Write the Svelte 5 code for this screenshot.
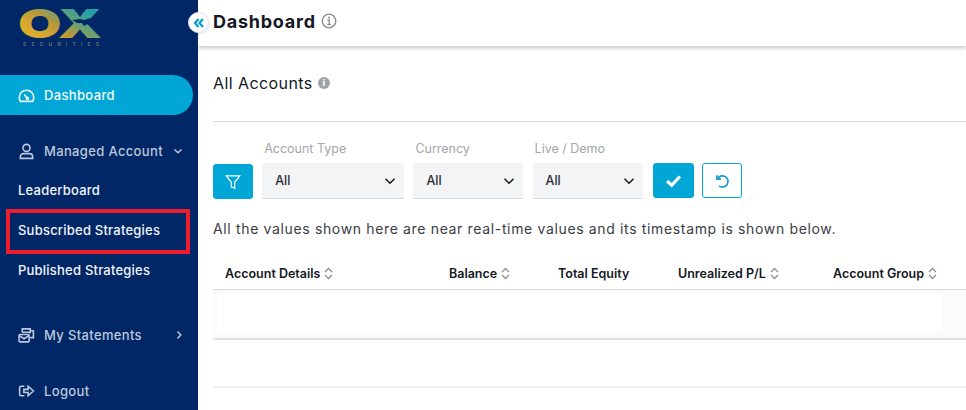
<script lang="ts">
  type Col = { label: string; sortable: boolean }

  const filters = [
    { label: "Account Type", width: 142 },
    { label: "Currency", width: 110 },
    { label: "Live / Demo", width: 110 },
  ]

  const columns: Col[] = [
    { label: "Account Details", sortable: true },
    { label: "Balance", sortable: true },
    { label: "Total Equity", sortable: false },
    { label: "Unrealized P/L", sortable: true },
    { label: "Account Group", sortable: true },
  ]
</script>

<div class="app">
  <aside class="sidebar">
    <div class="logo">
      <svg width="90" height="50" viewBox="0 0 90 50" aria-label="OX Securities">
        <defs>
          <linearGradient id="oxfill" x1="0" y1="1" x2="1" y2="0.1">
            <stop offset="0" stop-color="#e3b32c" />
            <stop offset="0.3" stop-color="#d9a92e" />
            <stop offset="0.48" stop-color="#b8983a" />
            <stop offset="0.62" stop-color="#6fa070" />
            <stop offset="0.8" stop-color="#2a9fa0" />
            <stop offset="1" stop-color="#1c9fc4" />
          </linearGradient>
        </defs>
        <text class="ox" x="0" y="38" textLength="84" lengthAdjust="spacingAndGlyphs" fill="url(#oxfill)">OX</text>
        <path d="M54 20l8-1 4 1 6-2-1 5-5 3-2-3-5 0z" fill="#012766" />
        <text class="sec" x="5" y="46" textLength="76">SECURITIES</text>
      </svg>
    </div>

    <a class="item active" href="#dashboard">
      <svg class="ico" viewBox="0 0 16 16"><path d="M2.200 13.500A6.600 6.600 0 0 1 1.200 9.800a6.800 6.800 0 0 1 13.600 0c0 1.400-.4 2.700-1 3.700z M6 7l2.600 3.500" /><circle cx="8.800" cy="10.700" r="1" /></svg>
      <span>Dashboard</span>
    </a>

    <div class="group">
      <a class="item muted" href="#managed">
        <svg class="ico" viewBox="0 0 16 16"><circle cx="8" cy="4.600" r="3.300" /><path d="M2.200 14.500v-1.500a3 3 0 0 1 3-3h5.600a3 3 0 0 1 3 3v1.500z" /></svg>
        <span>Managed Account</span>
        <svg class="caret down" viewBox="0 0 10 10"><path d="M1.500 3.500 5 6.800l3.500-3.300" /></svg>
      </a>
      <ul class="sub">
        <li><a href="#leaderboard">Leaderboard</a></li>
        <li class="marked"><a href="#subscribed">Subscribed Strategies</a></li>
        <li><a href="#published">Published Strategies</a></li>
      </ul>
    </div>

    <a class="item muted statements" href="#statements">
      <svg class="ico" viewBox="0 0 16 16"><path d="M4 5V1.800h7.500V5 M11.500 3.500h3v6.500h-3 M4 5h7.500v1" /><rect x="1" y="7" width="9.500" height="7" rx="1" /><path d="M1 8l4.700 3 4.800-3" /></svg>
      <span>My Statements</span>
      <svg class="caret" viewBox="0 0 10 10"><path d="M3.500 1.500 6.800 5 3.500 8.500" /></svg>
    </a>

    <a class="item muted logout" href="#logout">
      <svg class="ico" viewBox="0 0 16 16"><path d="M6 3H3a1.500 1.500 0 0 0-1.500 1.500v6A1.500 1.500 0 0 0 3 12h3 M5.500 6h4V3l5 4.500-5 4.500V9h-4z" /></svg>
      <span>Logout</span>
    </a>
  </aside>

  <button class="collapse" aria-label="Collapse sidebar">
    <svg viewBox="0 0 12 12" width="12" height="12"><path d="M5.500 2 2 6l3.500 4 M10 2 6.500 6l3.500 4" /></svg>
  </button>

  <main class="main">
    <header class="topbar">
      <h1>Dashboard</h1>
      <svg class="info" viewBox="0 0 16 16" width="16" height="16"><circle cx="8" cy="8" r="6.800" /><path d="M6.500 7h1.700v4.500 M6.300 11.700h3.500" /><circle class="dot" cx="8" cy="4.500" r="1" /></svg>
    </header>

    <section class="content">
      <div class="title">
        <h2>All Accounts</h2>
        <span class="badge">i</span>
      </div>

      <div class="filters">
        <button class="btn solid filter" aria-label="Filter">
          <svg viewBox="0 0 16 16" width="16" height="16"><path d="M1.200 1.800h13.600L9.700 8.300v6l-3.400-1.500V8.300z" /></svg>
        </button>
        {#each filters as f}
          <div class="field" style="width: {f.width}px">
            <span class="field-label">{f.label}</span>
            <div class="select">
              <span>All</span>
              <svg viewBox="0 0 12 12" width="12" height="12"><path d="M1.500 3.800 6 8.200l4.500-4.400" /></svg>
            </div>
          </div>
        {/each}
        <button class="btn solid apply" aria-label="Apply">
          <svg viewBox="0 0 16 16" width="17" height="17"><path d="M2 8.500 6.300 12.500 14 4.200" /></svg>
        </button>
        <button class="btn outline" aria-label="Reset">
          <svg viewBox="0 0 16 16" width="16" height="16"><path d="M3 2.200v4h4 M3.300 6.200A5.600 5.600 0 1 1 5 12.900" /></svg>
        </button>
      </div>

      <p class="note">All the values shown here are near real-time values and its timestamp is shown below.</p>

      <div class="table">
        <div class="thead">
          {#each columns as c}
            <div class="th">
              <span>{c.label}</span>
              {#if c.sortable}
                <svg viewBox="0 0 9 13" width="9" height="13"><path d="M1 5 4.500 1.500 8 5 M1 8l3.500 3.500L8 8" /></svg>
              {/if}
            </div>
          {/each}
        </div>
        <div class="row"><div class="row-inner"></div></div>
        <div class="spacer"></div>
      </div>
    </section>
  </main>
</div>

<style>
  :global(body) {
    margin: 0;
    font-family: "Inter", "Open Sans", sans-serif;
    background: #fff;
    color: #14181f;
    overflow: hidden;
  }

  .app {
    position: relative;
    display: flex;
    height: 410px;
    overflow: hidden;
  }

  .sidebar {
    flex: 0 0 198px;
    display: flex;
    flex-direction: column;
    background: #012766;
    color: #fff;
  }

  .sidebar > * {
    flex: none;
  }

  .logo {
    height: 75px;
    padding-left: 18px;
  }

  .logo svg {
    display: block;
  }

  .ox {
    font-family: "Inter", sans-serif;
    font-size: 40px;
    font-weight: 900;
  }

  .sec {
    font-family: "Inter", sans-serif;
    font-size: 5px;
    fill: #6e7a66;
    font-weight: 600;
  }

  a {
    text-decoration: none;
    color: inherit;
  }

  .item {
    display: flex;
    align-items: center;
    gap: 9px;
    height: 40px;
    padding-left: 18px;
    font-size: 13px;
    font-weight: 500;
    letter-spacing: 0.35px;
  }

  .ico {
    flex: none;
    width: 17px;
    height: 17px;
    fill: none;
    stroke: currentColor;
    stroke-width: 1.500;
  }

  .active {
    width: 175px;
    border-radius: 0 20px 20px 0;
    background: #00a6d6;
    color: #f2fbff;
  }

  .group {
    margin-top: 16px;
  }

  .muted {
    color: #bcc8dc;
  }

  .caret {
    width: 10px;
    height: 10px;
    fill: none;
    stroke: currentColor;
    stroke-width: 1.500;
  }

  .caret.down {
    margin-left: 1px;
  }

  .sub {
    list-style: none;
    margin: -1px 0 0;
    padding: 0;
  }

  .sub li {
    position: relative;
    display: flex;
    align-items: center;
    height: 40px;
    padding-left: 18px;
    font-size: 13px;
    font-weight: 500;
    letter-spacing: 0.22px;
    color: #f2f5fa;
  }

  .marked::after {
    content: "";
    position: absolute;
    left: 6px;
    top: -1px;
    width: 184px;
    height: 45px;
    box-sizing: border-box;
    border: 4px solid #ed1c2e;
  }

  .statements {
    margin-top: 25px;
  }

  .statements .caret {
    margin-left: 23px;
  }

  .logout {
    margin-top: 16px;
  }

  .collapse {
    position: absolute;
    left: 188px;
    top: 12px;
    width: 21px;
    height: 21px;
    padding: 0;
    display: grid;
    place-items: center;
    border: 1px solid #dfe6ee;
    border-radius: 50%;
    background: #fff;
    box-shadow: 0 1px 3px rgba(60, 70, 85, 0.15);
  }

  .collapse svg {
    fill: none;
    stroke: #00a0d2;
    stroke-width: 2.200;
  }

  .main {
    flex: 1;
    min-width: 0;
  }

  .topbar {
    display: flex;
    align-items: center;
    gap: 5px;
    box-sizing: border-box;
    height: 46px;
    padding: 0 0 4px 15px;
    box-shadow: 0 2px 4px rgba(60, 70, 85, 0.3);
  }

  h1 {
    margin: 0;
    font-size: 18px;
    font-weight: 700;
    letter-spacing: 0.75px;
  }

  .info {
    fill: none;
    stroke: #8a8a8a;
    stroke-width: 1.300;
  }

  .info .dot {
    fill: #8a8a8a;
    stroke: none;
  }

  .content {
    padding-left: 15px;
  }

  .title {
    display: flex;
    align-items: center;
    gap: 5px;
    box-sizing: content-box;
    height: 73px;
    padding-bottom: 2px;
    border-bottom: 1px solid #d6d8dc;
  }

  h2 {
    margin: 0;
    font-size: 16px;
    font-weight: 400;
    letter-spacing: 0.42px;
  }

  .badge {
    display: grid;
    place-items: center;
    width: 12px;
    height: 12px;
    border-radius: 50%;
    background: #a0a3a8;
    color: #fff;
    font-size: 9px;
    font-weight: 800;
  }

  .filters {
    display: flex;
    align-items: flex-end;
    gap: 9.200px;
    margin-top: 16px;
  }

  .field-label {
    display: block;
    height: 25px;
    line-height: 22px;
    padding-left: 2px;
    font-size: 12.500px;
    color: #a3a6ab;
  }

  .select {
    display: flex;
    align-items: center;
    justify-content: space-between;
    box-sizing: border-box;
    height: 36px;
    padding: 0 8px 0 13px;
    background: #f3f4f6;
    border-bottom: 1px solid #d9dbe0;
    border-radius: 3px 3px 0 0;
    font-size: 12.500px;
    font-weight: 500;
    color: #2a2d33;
  }

  .select svg {
    fill: none;
    stroke: #16181c;
    stroke-width: 1.500;
  }

  .btn {
    display: grid;
    place-items: center;
    box-sizing: border-box;
    width: 40px;
    height: 35px;
    padding: 0;
    border: 1px solid #00a6d6;
    border-radius: 3px;
    margin-bottom: 1px;
  }

  .solid {
    background: #00a6d6;
  }

  .filter {
    margin-bottom: 0;
  }

  .filter svg {
    fill: none;
    stroke: #fff;
    stroke-width: 1.200;
  }

  .apply {
    width: 41px;
    margin-left: 1px;
    margin-right: -1px;
  }

  .apply svg {
    fill: none;
    stroke: #fff;
    stroke-width: 3;
  }

  .outline {
    background: #fff;
  }

  .outline svg {
    fill: none;
    stroke: #1d9fd6;
    stroke-width: 1.800;
  }

  .note {
    margin: 20px 0 0;
    height: 20px;
    line-height: 20px;
    font-size: 14px;
    letter-spacing: 0.65px;
    color: #3a3d44;
  }

  .table {
    margin-top: 18px;
  }

  .thead {
    display: grid;
    grid-template-columns: 224px 109px 120px 155px 1fr;
    align-items: center;
    height: 32px;
    border-bottom: 1px solid #d9dadf;
  }

  .th {
    display: flex;
    align-items: center;
    gap: 4px;
    padding-left: 12px;
    font-size: 12.500px;
    font-weight: 600;
    color: #14181f;
  }

  .th svg {
    fill: none;
    stroke: #8d8f93;
    stroke-width: 1.300;
  }

  .row {
    box-sizing: border-box;
    height: 50px;
    padding: 4px 0 6px 4px;
    background: #fbfbfb;
    border-bottom: 2px solid #dfe0e4;
  }

  .row-inner {
    width: 725px;
    height: 100%;
    background: #fff;
  }

  .spacer {
    height: 46px;
    border-bottom: 2px solid #efeff3;
  }
</style>
